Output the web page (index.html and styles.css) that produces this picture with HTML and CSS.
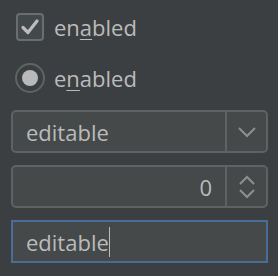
FILE: index.html
```html
<!DOCTYPE html>
<html lang="en">
<head>
  <meta charset="UTF-8">
  <title>Controls</title>
  <link rel="stylesheet" href="styles.css">
</head>
<body>
  <div class="panel">
    <label class="check-row">
      <span class="checkbox">
        <svg width="20" height="18" viewBox="0 0 20 18"><path d="M3 9.5 L8 14.5 L17 3" fill="none" stroke="#bcbcbc" stroke-width="3.2" stroke-linecap="round" stroke-linejoin="round"/></svg>
      </span>
      <span class="label">en<u>a</u>bled</span>
    </label>

    <label class="radio-row">
      <span class="radio"><span class="radio-dot"></span></span>
      <span class="label">e<u>n</u>abled</span>
    </label>

    <div class="combo">
      <div class="field-text">editable</div>
      <div class="side-btn">
        <svg width="20" height="12" viewBox="0 0 20 12"><path d="M2 2 L10 10 L18 2" fill="none" stroke="#8d9092" stroke-width="2"/></svg>
      </div>
    </div>

    <div class="spin">
      <div class="field-text number">0</div>
      <div class="side-btn spin-btns">
        <svg width="18" height="10" viewBox="0 0 18 10"><path d="M2 9 L9 2 L16 9" fill="none" stroke="#8d9092" stroke-width="2"/></svg>
        <svg width="18" height="10" viewBox="0 0 18 10"><path d="M2 1 L9 8 L16 1" fill="none" stroke="#8d9092" stroke-width="2"/></svg>
      </div>
    </div>

    <div class="textfield">
      <span class="field-text">editable</span><span class="caret"></span>
    </div>
  </div>
</body>
</html>
```

FILE: styles.css
```css
html, body {
  margin: 0;
  padding: 0;
  background-color: #3c3f41;
}
body {
  font-family: "Open Sans", "Noto Sans", sans-serif;
  font-size: 22px;
  color: #bbbbbb;
}
.panel {
  width: 257px;
  padding: 13px 0 0 11px;
  display: flex;
  flex-direction: column;
}
.check-row,
.radio-row {
  display: flex;
  align-items: center;
  height: 28px;
}
.check-row {
  padding-left: 5px;
}
.radio-row {
  margin-top: 22px;
  height: 30px;
  padding-left: 4px;
}
.label {
  line-height: 28px;
}
.label u {
  text-underline-offset: 3px;
  text-decoration-thickness: 1px;
}
.checkbox {
  box-sizing: border-box;
  width: 28px;
  height: 28px;
  border: 2px solid #6b6e70;
  border-radius: 4px;
  background-color: #43494a;
  display: flex;
  align-items: center;
  justify-content: center;
  margin-right: 10px;
}
.radio {
  box-sizing: border-box;
  width: 30px;
  height: 30px;
  border: 2px solid #5f6364;
  border-radius: 50%;
  display: flex;
  align-items: center;
  justify-content: center;
  margin-right: 9px;
}
.radio-dot {
  width: 16px;
  height: 16px;
  border-radius: 50%;
  background-color: #b9b9b9;
}
.combo,
.spin,
.textfield {
  box-sizing: border-box;
  height: 43px;
  display: flex;
  align-items: stretch;
  background-color: #45494a;
}
.combo,
.spin {
  border: 2px solid #5e6263;
  border-radius: 5px;
}
.combo {
  margin-top: 17px;
}
.spin {
  margin-top: 12px;
}
.field-text {
  flex: 1;
  display: flex;
  align-items: center;
  padding-left: 13px;
}
.number {
  justify-content: flex-end;
  padding-right: 13px;
}
.side-btn {
  width: 39px;
  border-left: 2px solid #5e6263;
  display: flex;
  align-items: center;
  justify-content: center;
}
.spin-btns {
  flex-direction: column;
  gap: 4px;
}
.textfield {
  margin-top: 12px;
  border: 2px solid #4a6d97;
  align-items: center;
}
.textfield .field-text {
  flex: 0 0 auto;
  height: 100%;
}
.caret {
  width: 1px;
  height: 30px;
  background-color: #bbbbbb;
}
```
